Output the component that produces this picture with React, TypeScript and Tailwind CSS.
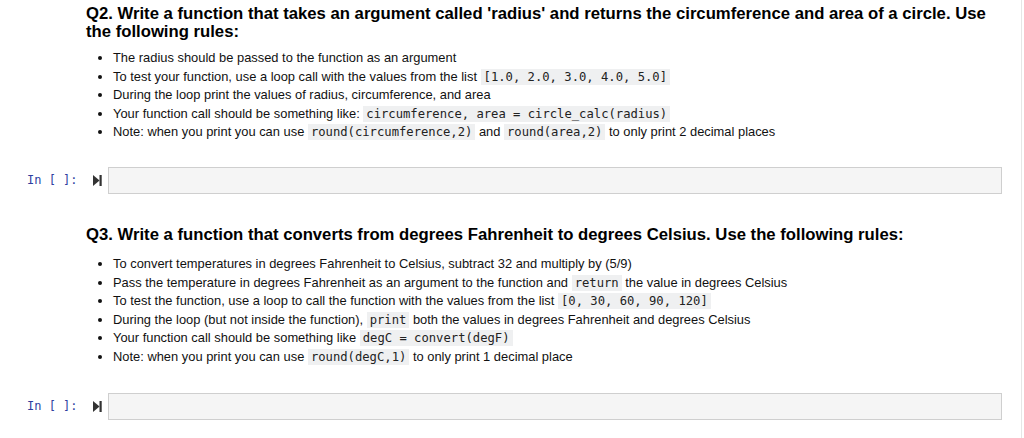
import type { ReactNode } from 'react'

const Code = ({ children }: { children: ReactNode }) => (
  <code className="bg-[#eff0f1] px-[3px] py-[1px] font-['DejaVu_Sans_Mono',monospace] text-[12.2px] text-[#222]">
    {children}
  </code>
)

const Bullet = ({ children }: { children: ReactNode }) => (
  <li className="h-[18.6px] leading-[18.6px]">{children}</li>
)

function RunIcon() {
  return (
    <svg width="9" height="11" viewBox="0 0 9 11" className="text-[#333]">
      <path d="M0 0 L6.5 5.5 L0 11 Z" fill="currentColor" />
      <rect x="6.5" y="0" width="2.2" height="11" fill="currentColor" />
    </svg>
  )
}

function CodeCell() {
  return (
    <div className="flex items-center h-[27px]">
      <div className="w-[93px] pl-[27px] font-['DejaVu_Sans_Mono',monospace] text-[12px] text-[#303f9f]">
        In [ ]:
      </div>
      <div className="w-[15px] flex items-center">
        <RunIcon />
      </div>
      <div className="w-[894px] h-[27px] bg-[#f5f5f5] border border-[#cfcfcf]" />
    </div>
  )
}

export default function App() {
  return (
    <div className="relative w-[1024px] h-[438px] bg-white overflow-hidden font-['Liberation_Sans',Arial,sans-serif] text-[#000]">
      {/* scrollbar edge */}
      <div className="absolute top-0 right-[2px] w-px h-full bg-[#e6e6e6]" />

      <div className="pl-[86px] pr-[20px] pt-[5px]">
        <h2 className="text-[16.7px] font-bold leading-[18px]">
          Q2. Write a function that takes an argument called 'radius' and returns the circumference and area of a circle. Use the following rules:
        </h2>
        <ul className="mt-[8px] pl-[27px] list-disc text-[12.9px] text-[#111]">
          <Bullet>The radius should be passed to the function as an argument</Bullet>
          <Bullet>
            To test your function, use a loop call with the values from the list <Code>[1.0, 2.0, 3.0, 4.0, 5.0]</Code>
          </Bullet>
          <Bullet>During the loop print the values of radius, circumference, and area</Bullet>
          <Bullet>
            Your function call should be something like: <Code>circumference, area = circle_calc(radius)</Code>
          </Bullet>
          <Bullet>
            Note: when you print you can use <Code>round(circumference,2)</Code> and <Code>round(area,2)</Code> to only print 2 decimal places
          </Bullet>
        </ul>
      </div>

      <div className="mt-[25px]">
        <CodeCell />
      </div>

      <div className="pl-[86px] pr-[20px] mt-[32px]">
        <h2 className="text-[16.7px] font-bold leading-[18px]">
          Q3. Write a function that converts from degrees Fahrenheit to degrees Celsius. Use the following rules:
        </h2>
        <ul className="mt-[11px] pl-[27px] list-disc text-[12.9px] text-[#111]">
          <Bullet>To convert temperatures in degrees Fahrenheit to Celsius, subtract 32 and multiply by (5/9)</Bullet>
          <Bullet>
            Pass the temperature in degrees Fahrenheit as an argument to the function and <Code>return</Code> the value in degrees Celsius
          </Bullet>
          <Bullet>
            To test the function, use a loop to call the function with the values from the list <Code>[0, 30, 60, 90, 120]</Code>
          </Bullet>
          <Bullet>
            During the loop (but not inside the function), <Code>print</Code> both the values in degrees Fahrenheit and degrees Celsius
          </Bullet>
          <Bullet>
            Your function call should be something like <Code>degC = convert(degF)</Code>
          </Bullet>
          <Bullet>
            Note: when you print you can use <Code>round(degC,1)</Code> to only print 1 decimal place
          </Bullet>
        </ul>
      </div>

      <div className="mt-[26px]">
        <CodeCell />
      </div>
    </div>
  )
}
